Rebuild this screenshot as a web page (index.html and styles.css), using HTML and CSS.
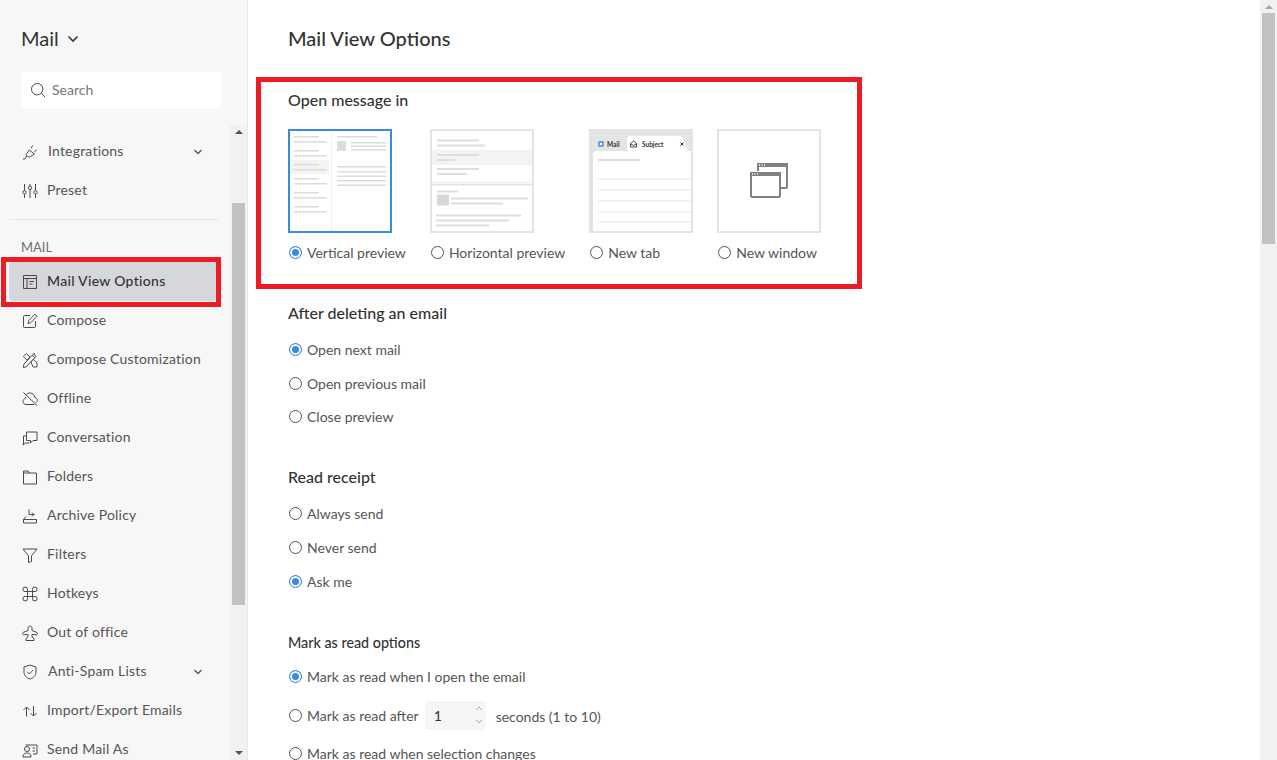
FILE: index.html
```html
<!DOCTYPE html>
<html lang="en">
<head>
    <meta charset="UTF-8">
    <meta name="viewport" content="width=device-width, initial-scale=1.0">
    <title>Mail View Options</title>
    <link rel="stylesheet" href="styles.css">
</head>
<body>
    <aside class="sidebar">
        <div class="app-title">
            <span>Mail</span>
            <svg width="12" height="8" viewBox="0 0 12 8" class="app-caret"><path d="M1.500 1.500 6 6l4.500-4.500"/></svg>
        </div>
        <div class="search">
            <svg width="16" height="16" viewBox="0 0 16 16" class="ico"><circle cx="7.200" cy="7.200" r="5.700"/><path d="m11.400 11.400 3.600 3.600"/></svg>
            <span>Search</span>
        </div>
        <div class="nav-wrap">
            <nav class="nav">
                <a class="nav-item nav-group">
                    <svg width="16" height="16" viewBox="0 0 16 16" class="ico"><path d="M1 15h1.800l2-3.200M4.800 11.800l-1-1 3.500-4.800 5 4-3.700 2.500c-1.300.8-2.800.5-3.800-.7zM9 4.200 10.800 1.500M12.300 8l2.400-2"/></svg>
                    <span>Integrations</span>
                    <svg width="10" height="6" viewBox="0 0 10 6" class="nav-caret"><path d="M1.500 1 5 4.500 8.500 1"/></svg>
                </a>
                <a class="nav-item">
                    <svg width="16" height="16" viewBox="0 0 16 16" class="ico"><path d="M2.500 1v6.500M2.500 11v4M8 1v2M8 6.500V15M13.500 1v6.500M13.500 11v4"/><circle cx="2.500" cy="9.300" r="1.700"/><circle cx="8" cy="4.800" r="1.700"/><circle cx="13.500" cy="9.300" r="1.700"/></svg>
                    <span>Preset</span>
                </a>
                <hr class="nav-divider">
                <div class="nav-heading">MAIL</div>
                <a class="nav-item active">
                    <svg width="16" height="16" viewBox="0 0 16 16" class="ico"><path d="M1.500 1.500h13v13h-13zM1.500 4.500h13M5 4.500v10M7.500 7.500h4.500M7.500 10h3"/></svg>
                    <span>Mail View Options</span>
                </a>
                <a class="nav-item">
                    <svg width="16" height="16" viewBox="0 0 16 16" class="ico"><path d="M8 2.500H2.500a1 1 0 0 0-1 1v10a1 1 0 0 0 1 1h10a1 1 0 0 0 1-1V8"/><path d="M6 10.500l.7-3L13 1.200l2 2-6.200 6.500z"/></svg>
                    <span>Compose</span>
                </a>
                <a class="nav-item">
                    <svg width="16" height="16" viewBox="0 0 16 16" class="ico"><path d="M1.800 12.300 11.500 2l2.600 2.300-9.800 10.400-3 .8zM10.200 3.500l2.700 2.300M13 1.500l-1.500.5M1.300 4.500 4.300 1.500l3.700 3.700-3 3zM8.800 10l2.700-2.700 3.500 3.700v4h-3.800z"/></svg>
                    <span>Compose Customization</span>
                </a>
                <a class="nav-item">
                    <svg width="16" height="16" viewBox="0 0 16 16" class="ico"><path d="M1.500 1.500l13.500 13M4.500 3.500C5.500 2.500 6.700 2 8 2c2.600 0 4.500 2 4.800 4.500 1.500.4 2.500 1.600 2.500 3 0 .8-.3 1.500-.8 2.100M12.300 13.500H4C2.300 13.500 1 12.300 1 10.500c0-1.600 1-2.800 2.500-3.200 0-.5.100-1 .3-1.500"/></svg>
                    <span>Offline</span>
                </a>
                <a class="nav-item">
                    <svg width="16" height="16" viewBox="0 0 16 16" class="ico"><path d="M4.500 2h10.500v8.500h-4l-2.500 2.500v-2.500h-4z"/><path d="M4.500 6H1.500v7l-.5 2 2.500-2h4"/></svg>
                    <span>Conversation</span>
                </a>
                <a class="nav-item">
                    <svg width="16" height="16" viewBox="0 0 16 16" class="ico"><path d="M1.500 2h4.500l1.500 2h7v11h-13zM1.500 4h6"/></svg>
                    <span>Folders</span>
                </a>
                <a class="nav-item">
                    <svg width="16" height="16" viewBox="0 0 16 16" class="ico"><path d="M7 1.500v5h5M10 4.500l2 2-2 2M4 8.500 1.500 11.500v3.500h13v-3.500h-13M3.500 11.500h9"/></svg>
                    <span>Archive Policy</span>
                </a>
                <a class="nav-item">
                    <svg width="16" height="16" viewBox="0 0 16 16" class="ico"><path d="M1 2h14L9.500 8.800v5.700l-3 1V8.800z"/></svg>
                    <span>Filters</span>
                </a>
                <a class="nav-item">
                    <svg width="16" height="16" viewBox="0 0 16 16" class="ico"><path d="M5.500 5.500h5v5h-5zM5.500 5.500H4A2.300 2.300 0 1 1 5.500 3.500zM10.500 5.500V3.500A2.300 2.300 0 1 1 12 5.500zM5.500 10.500V12.500A2.300 2.300 0 1 1 4 10.500zM10.500 10.500H12A2.300 2.300 0 1 1 10.500 12.500z"/></svg>
                    <span>Hotkeys</span>
                </a>
                <a class="nav-item">
                    <svg width="16" height="16" viewBox="0 0 16 16" class="ico"><path d="M6 5.500V3c0-2.500 4-2.500 4 0v2.500l5 2c.6.400.6 2-.2 2.300L10 9.500v2.500l2 1.500v2H4v-2l2-1.500V9.500l-4.800.3c-.8-.3-.8-1.900-.2-2.300z"/></svg>
                    <span>Out of office</span>
                </a>
                <a class="nav-item nav-group">
                    <svg width="16" height="16" viewBox="0 0 16 16" class="ico"><path d="M8 1l6 2v5c0 3.500-2.500 6-6 7-3.500-1-6-3.500-6-7V3z"/><path d="M5.200 7.800 7.300 10l3.700-3.800"/></svg>
                    <span>Anti-Spam Lists</span>
                    <svg width="10" height="6" viewBox="0 0 10 6" class="nav-caret"><path d="M1.500 1 5 4.500 8.500 1"/></svg>
                </a>
                <a class="nav-item">
                    <svg width="16" height="16" viewBox="0 0 16 16" class="ico"><path d="M4.500 13.500V4M1.500 7 4.500 4l3 3M11.500 3v10M8.500 10l3 3 3-3"/></svg>
                    <span>Import/Export Emails</span>
                </a>
                <a class="nav-item">
                    <svg width="16" height="16" viewBox="0 0 16 16" class="ico"><path d="M3.500 3h11.500v9h-4M10.500 6H13M10.500 9H13"/><circle cx="5" cy="7" r="2.500"/><path d="M1 15v-1c0-1.800 1.800-3 4-3s4 1.200 4 3v1z"/></svg>
                    <span>Send Mail As</span>
                </a>
            </nav>
            <div class="scrollbar nav-scrollbar">
                <span class="arrow-up"></span>
                <span class="thumb"></span>
                <span class="arrow-down"></span>
            </div>
        </div>
    </aside>

    <main class="main">
        <h1 class="page-title">Mail View Options</h1>

        <section class="section section-open">
            <h2 class="section-title">Open message in</h2>
            <div class="preview-options">
                <label class="preview-option">
                    <svg class="thumb-img selected" width="104" height="104" viewBox="0 0 104 104">
                        <rect x="2" y="31" width="39" height="14" fill="#f3f3f3"/>
                        <rect x="43" y="2" width="1" height="100" fill="#efefef"/>
                        <g fill="#dcdcdc">
                            <rect x="6" y="7" width="25" height="1.500"/><rect x="6" y="12" width="33" height="1.500"/>
                            <rect x="6" y="21" width="25" height="1.500"/><rect x="6" y="26" width="33" height="1.500"/>
                            <rect x="6" y="35" width="25" height="1.500"/><rect x="6" y="40" width="33" height="1.500"/>
                            <rect x="6" y="49" width="25" height="1.500"/><rect x="6" y="54" width="33" height="1.500"/>
                            <rect x="6" y="63" width="25" height="1.500"/><rect x="6" y="68" width="33" height="1.500"/>
                            <rect x="6" y="77" width="25" height="1.500"/><rect x="6" y="82" width="33" height="1.500"/>
                            <rect x="49" y="7" width="40" height="1.500"/>
                            <rect x="49" y="12" width="9" height="10"/>
                            <rect x="63" y="13" width="35" height="1.500"/><rect x="63" y="16.500" width="35" height="1.500"/><rect x="63" y="20" width="35" height="1.500"/>
                            <rect x="49" y="37" width="49" height="1.500"/><rect x="49" y="42" width="49" height="1.500"/><rect x="49" y="46.500" width="49" height="1.500"/><rect x="49" y="51" width="49" height="1.500"/><rect x="49" y="55.500" width="49" height="1.500"/>
                        </g>
                    </svg>
                    <span class="radio-row"><input type="radio" name="open" checked> Vertical preview</span>
                </label>
                <label class="preview-option">
                    <svg class="thumb-img" width="104" height="104" viewBox="0 0 104 104">
                        <rect x="2" y="21" width="100" height="15" fill="#f3f3f3"/>
                        <rect x="2" y="52" width="100" height="4" fill="#f5f5f5"/>
                        <rect x="2" y="55" width="100" height="1.500" fill="#e2e2e2"/>
                        <g fill="#dedede">
                            <rect x="7" y="10.500" width="42" height="2"/><rect x="7" y="15.500" width="48" height="2"/>
                            <rect x="7" y="25" width="42" height="2"/><rect x="7" y="30" width="18" height="2"/>
                            <rect x="7" y="39" width="42" height="2"/><rect x="7" y="44" width="30" height="2"/>
                            <rect x="7" y="61.500" width="21" height="2"/>
                            <rect x="7" y="65.500" width="12" height="11" fill="#d8d8d8"/>
                            <rect x="21" y="68.500" width="77" height="2"/><rect x="21" y="73.500" width="52" height="2"/>
                            <rect x="6" y="85.500" width="85" height="2"/><rect x="6" y="90.500" width="73" height="2"/><rect x="6" y="95.500" width="53" height="2"/>
                        </g>
                    </svg>
                    <span class="radio-row"><input type="radio" name="open"> Horizontal preview</span>
                </label>
                <label class="preview-option">
                    <svg class="thumb-img thumb-tab" width="104" height="104" viewBox="0 0 104 104">
                        <rect width="104" height="104" fill="#e4e4e4"/>
                        <path d="M4 26a4 4 0 0 1 4-4h30v-11a4 4 0 0 1 4-4h48c3 0 4 2 5 5l4 10h7v80H4z" fill="#fff"/>
                        <rect x="0" y="102" width="104" height="2" fill="#e4e4e4"/>
                        <rect x="102" y="22" width="2" height="82" fill="#e4e4e4"/>
                        <rect x="9" y="12" width="6" height="6" rx="1" fill="#6f9cec"/>
                        <rect x="11" y="14" width="2" height="2" fill="#fff"/>
                        <text x="18" y="17.500" class="tab-label">Mail</text>
                        <path d="M41.500 14.500l3-2.500 3 2.500v3.500h-6zM41.500 14.800l3 1.700 3-1.700" fill="none" stroke="#333" stroke-width=".9"/>
                        <text x="53" y="17.500" class="tab-label">Subject</text>
                        <path d="M91.500 13.500l3 3M94.500 13.500l-3 3" stroke="#333"/>
                        <rect x="9" y="30" width="42" height="2" fill="#dedede"/>
                        <g fill="#f2f2f2">
                            <rect x="9" y="49" width="93" height="2"/><rect x="9" y="60" width="93" height="2"/><rect x="9" y="71" width="93" height="2"/><rect x="9" y="82" width="93" height="2"/><rect x="9" y="92" width="93" height="2"/>
                        </g>
                    </svg>
                    <span class="radio-row"><input type="radio" name="open"> New tab</span>
                </label>
                <label class="preview-option">
                    <svg class="thumb-img" width="104" height="104" viewBox="0 0 104 104">
                        <path d="M41 42v-6a1 1 0 0 1 1-1h27a1 1 0 0 1 1 1v22a1 1 0 0 1-1 1h-5" fill="none" stroke="#808080" stroke-width="2"/>
                        <rect x="40" y="34" width="31" height="4" fill="#808080"/>
                        <rect x="34" y="44" width="29" height="24" rx="1" fill="#fff" stroke="#808080" stroke-width="2"/>
                        <rect x="33" y="43" width="31" height="4" fill="#808080"/>
                        <path d="M35 45h1M37.500 45h1M40 45h1M42 36h1M44.500 36h1M47 36h1" stroke="#fff" stroke-width="1.500"/>
                    </svg>
                    <span class="radio-row"><input type="radio" name="open"> New window</span>
                </label>
            </div>
        </section>

        <section class="section">
            <h2 class="section-title">After deleting an email</h2>
            <label class="radio-row option"><input type="radio" name="deleting" checked> Open next mail</label>
            <label class="radio-row option"><input type="radio" name="deleting"> Open previous mail</label>
            <label class="radio-row option"><input type="radio" name="deleting"> Close preview</label>
        </section>

        <section class="section section-receipt">
            <h2 class="section-title">Read receipt</h2>
            <label class="radio-row option"><input type="radio" name="receipt"> Always send</label>
            <label class="radio-row option"><input type="radio" name="receipt"> Never send</label>
            <label class="radio-row option"><input type="radio" name="receipt" checked> Ask me</label>
        </section>

        <section class="section">
            <h2 class="section-title section-title-sm">Mark as read options</h2>
            <label class="radio-row option"><input type="radio" name="markread" checked> Mark as read when I open the email</label>
            <div class="radio-row option option-input">
                <input type="radio" name="markread"> Mark as read after
                <div class="number-box">
                    <span>1</span>
                    <svg width="10" height="24" viewBox="0 0 10 24"><path d="M2 7l3-3 3 3M2 17l3 3 3-3"/></svg>
                </div>
                <span class="seconds">seconds (1 to 10)</span>
            </div>
            <label class="radio-row option"><input type="radio" name="markread"> Mark as read when selection changes</label>
        </section>
    </main>

    <div class="scrollbar page-scrollbar">
        <span class="arrow-up"></span>
        <span class="thumb"></span>
    </div>

    <!-- red callouts drawn on top of the screenshot -->
    <div class="callout callout-nav"></div>
    <div class="callout callout-open"></div>
</body>
</html>
```

FILE: styles.css
```css
:root {
    --text-color: #555;
    --dark-text: #333;
    --blue: #3a8bdb;
    --line: #e4e4e4;
    --scroll-track: #f1f1f1;
    --scroll-thumb: #c1c1c1;
}

* {
    margin: 0;
    padding: 0;
    box-sizing: border-box;
    font-family: 'Lato', 'Liberation Sans', sans-serif;
}

html, body {
    height: 100%;
    overflow: hidden;
}

body {
    display: flex;
    background-color: white;
    color: var(--text-color);
    font-size: 14px;
}

.ico {
    flex: none;
    fill: none;
    stroke: #4a4a4a;
    stroke-width: 1;
    stroke-linejoin: round;
}

/* sidebar */
.sidebar {
    width: 248px;
    flex: none;
    display: flex;
    flex-direction: column;
    background-color: #f7f7f7;
    border-right: 1px solid #e8e8e8;
}

.app-title {
    display: flex;
    align-items: center;
    gap: 8px;
    height: 24px;
    margin: 26px 0 22px 21px;
    font-size: 20px;
    color: var(--dark-text);
}

.app-caret {
    margin-top: 2px;
    fill: none;
    stroke: #333;
    stroke-width: 1.600;
}

.search {
    display: flex;
    align-items: center;
    gap: 6px;
    width: 200px;
    height: 36px;
    margin-left: 21px;
    padding-left: 9px;
    background-color: white;
    border-radius: 4px;
    color: #777;
}

.search span {
    margin-bottom: 2px;
}

.nav-wrap {
    flex: 1;
    min-height: 0;
    display: flex;
    margin-top: 17px;
}

.nav {
    flex: 1;
    min-width: 0;
    overflow: hidden;
    padding-top: 7px;
}

.nav-item {
    display: flex;
    align-items: center;
    gap: 9px;
    width: 208px;
    height: 39px;
    margin-left: 9px;
    padding-left: 13px;
    border-radius: 4px;
    letter-spacing: .2px;
}

.nav-item span {
    margin-bottom: 2px;
}

.nav-item.active {
    background-color: #d6d7db;
    color: var(--dark-text);
    font-weight: 500;
    letter-spacing: .3px;
}

.nav-group {
    gap: 10px;
}

.nav-caret {
    margin-left: auto;
    margin-right: 14px;
    fill: none;
    stroke: #555;
    stroke-width: 1.300;
}

.nav-divider {
    width: 209px;
    height: 1px;
    margin: 9px 0 0 9px;
    border: 0;
    background-color: #e5e5e5;
}

.nav-heading {
    height: 16px;
    margin: 19px 0 7px 21px;
    font-size: 13px;
    line-height: 16px;
    color: #6f6f7a;
}

/* fake scrollbars */
.scrollbar {
    position: relative;
    flex: none;
    width: 17px;
    background-color: var(--scroll-track);
}

.scrollbar .thumb {
    position: absolute;
    left: 2px;
    width: 13px;
    background-color: var(--scroll-thumb);
}

.nav-scrollbar .thumb {
    top: 78px;
    height: 402px;
}

.page-scrollbar .thumb {
    top: 13px;
    height: 231px;
}

.arrow-up, .arrow-down {
    position: absolute;
    left: 5px;
    width: 0;
    height: 0;
    border-left: 4px solid transparent;
    border-right: 4px solid transparent;
}

.arrow-up {
    top: 5px;
    border-bottom: 4px solid #555;
}

.arrow-down {
    bottom: 5px;
    border-top: 4px solid #555;
}

.page-scrollbar .arrow-up {
    border-bottom-color: #a3a3a3;
}

/* main panel */
.main {
    flex: 1;
    min-width: 0;
    overflow: hidden;
    padding: 26px 0 0 40px;
}

.page-title {
    height: 24px;
    margin-bottom: 40px;
    font-size: 20px;
    line-height: 24px;
    font-weight: 500;
    color: var(--dark-text);
}

.section {
    margin-bottom: 33px;
}

.section-open {
    margin-bottom: 41px;
}

.section-receipt .option {
    height: 34px;
}

.section-title {
    height: 20px;
    margin-bottom: 10px;
    font-size: 16px;
    line-height: 19px;
    font-weight: 500;
    color: var(--dark-text);
}

.section-open .section-title {
    margin-bottom: 19px;
}

.section-title-sm {
    margin-top: 34px;
    margin-bottom: 7px;
    font-size: 14.300px;
}

.preview-options {
    display: flex;
    gap: 24px;
}

.preview-option {
    display: flex;
    flex-direction: column;
    gap: 9px;
}

.thumb-img {
    display: block;
    outline: 2px solid var(--line);
    outline-offset: -2px;
}

.thumb-img.selected {
    outline-color: var(--blue);
}

.thumb-img.thumb-tab {
    outline: 0;
}

.tab-label {
    font-size: 6.500px;
    font-weight: bold;
    fill: #333;
}

.radio-row {
    display: flex;
    align-items: center;
    gap: 5px;
    height: 20px;
    white-space: nowrap;
}

.option {
    height: 33.500px;
}

.option-input {
    height: 44px;
}

input[type="radio"] {
    appearance: none;
    flex: none;
    width: 13px;
    height: 13px;
    margin-left: 1px;
    border: 1px solid #555;
    border-radius: 50%;
    background-color: white;
}

input[type="radio"]:checked {
    border-color: var(--blue);
    background-color: var(--blue);
    box-shadow: inset 0 0 0 2px white;
}

.number-box {
    display: flex;
    align-items: center;
    justify-content: space-between;
    width: 61px;
    height: 29px;
    margin-left: 1px;
    padding: 0 2px 0 9px;
    background-color: #f4f5f5;
    border-radius: 4px;
    color: var(--dark-text);
}

.number-box svg {
    fill: none;
    stroke: #aaa;
}

.seconds {
    margin-top: 2px;
    margin-left: 5px;
}

/* red callouts */
.callout {
    position: absolute;
    border: 5px solid #ed1c24;
    pointer-events: none;
}

.callout-nav {
    left: 1px;
    top: 257px;
    width: 220px;
    height: 50px;
}

.callout-open {
    left: 256px;
    top: 77px;
    width: 606px;
    height: 212px;
}
```
